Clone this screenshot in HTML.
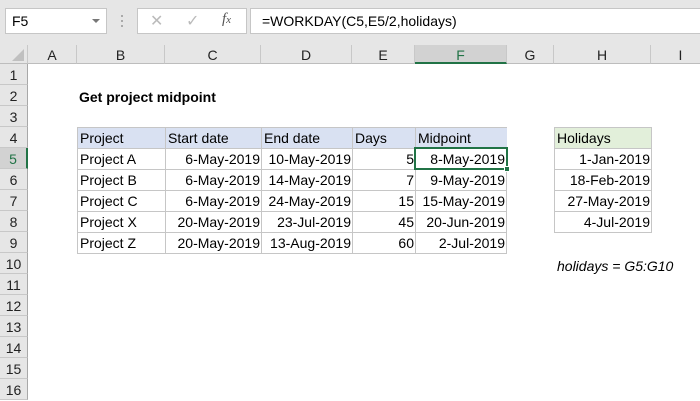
<!DOCTYPE html>
<html><head><meta charset="utf-8"><style>
*{margin:0;padding:0;box-sizing:border-box}
body{width:700px;height:400px;overflow:hidden;background:#fff;font-family:"Liberation Sans",sans-serif;font-size:14px;color:#000;position:relative}
.a{position:absolute}
.ch{position:absolute;top:45px;height:19px;background:#e6e6e6;border-right:1px solid #c8c8c8;border-bottom:1px solid #bdbdbd;text-align:center;line-height:20px;font-size:14px;color:#222}
.rh{position:absolute;left:0;width:28px;height:21px;background:#e6e6e6;border-bottom:1px solid #c8c8c8;border-right:1px solid #a8a8a8;text-align:center;line-height:22px;color:#222;font-size:14px}
.c{position:absolute;height:22px;border:1px solid #c6c6c6;line-height:21px;padding:0 1px 0 2px;white-space:nowrap;overflow:hidden}
.r{text-align:right}
</style></head><body>
<div class="a" style="left:0;top:0;width:700px;height:45px;background:#e6e6e6"></div>
<div class="a" style="left:5px;top:8px;width:102px;height:26px;background:#fff;border:1px solid #c6c6c6;line-height:24px;padding-left:6px">F5</div>
<div class="a" style="left:92px;top:19px;width:0;height:0;border-left:4px solid transparent;border-right:4px solid transparent;border-top:4px solid #777"></div>
<div class="a" style="left:121px;top:15px;width:2px;height:2px;background:#aaa;box-shadow:0 5px 0 #aaa,0 10px 0 #aaa"></div>
<div class="a" style="left:137px;top:8px;width:110px;height:26px;background:#fff;border:1px solid #c6c6c6"></div>
<div class="a" style="left:150px;top:11px;color:#bbb;font-size:16px">✕</div>
<div class="a" style="left:186px;top:11px;color:#bbb;font-size:16px">✓</div>
<div class="a" style="left:222px;top:11px;color:#555;font-family:'Liberation Serif',serif;font-style:italic;font-size:15px">f<span style="font-size:11px">x</span></div>
<div class="a" style="left:250px;top:8px;width:460px;height:26px;background:#fff;border:1px solid #c6c6c6;line-height:24px;padding-left:11px">=WORKDAY(C5,E5/2,holidays)</div>

<div class="a" style="left:0;top:45px;width:28px;height:19px;background:#e6e6e6;border-right:1px solid #c8c8c8;border-bottom:1px solid #bdbdbd"></div>
<div class="a" style="left:12px;top:49px;width:0;height:0;border-left:12px solid transparent;border-bottom:12px solid #c0c0c0"></div>
<div class="ch" style="left:28px;width:49px">A</div>
<div class="ch" style="left:77px;width:88px">B</div>
<div class="ch" style="left:165px;width:96px">C</div>
<div class="ch" style="left:261px;width:91px">D</div>
<div class="ch" style="left:352px;width:63px">E</div>
<div class="ch" style="left:415px;width:92px;background:#d2d2d2;border-bottom:2px solid #217346;color:#217346">F</div>
<div class="ch" style="left:507px;width:47px">G</div>
<div class="ch" style="left:554px;width:97px">H</div>
<div class="ch" style="left:651px;width:60px">I</div>

<div class="rh" style="top:64px">1</div>
<div class="rh" style="top:85px">2</div>
<div class="rh" style="top:106px">3</div>
<div class="rh" style="top:127px">4</div>
<div class="rh" style="top:148px;background:#d2d2d2;border-right:2px solid #217346;color:#217346">5</div>
<div class="rh" style="top:169px">6</div>
<div class="rh" style="top:190px">7</div>
<div class="rh" style="top:211px">8</div>
<div class="rh" style="top:232px">9</div>
<div class="rh" style="top:253px">10</div>
<div class="rh" style="top:274px">11</div>
<div class="rh" style="top:295px">12</div>
<div class="rh" style="top:316px">13</div>
<div class="rh" style="top:337px">14</div>
<div class="rh" style="top:358px">15</div>
<div class="rh" style="top:379px">16</div>

<div class="a" style="left:79px;top:89px;font-weight:bold">Get project midpoint</div>

<div class="c" style="left:77px;top:127px;width:89px;background:#d9e1f2">Project</div>
<div class="c" style="left:165px;top:127px;width:97px;background:#d9e1f2">Start date</div>
<div class="c" style="left:261px;top:127px;width:92px;background:#d9e1f2">End date</div>
<div class="c" style="left:352px;top:127px;width:64px;background:#d9e1f2">Days</div>
<div class="c" style="left:415px;top:127px;width:92px;background:#d9e1f2;border-right:none">Midpoint</div>

<div class="c" style="left:77px;top:148px;width:89px">Project A</div>
<div class="c r" style="left:165px;top:148px;width:97px">6-May-2019</div>
<div class="c r" style="left:261px;top:148px;width:92px">10-May-2019</div>
<div class="c r" style="left:352px;top:148px;width:64px">5</div>
<div class="c r" style="left:415px;top:148px;width:92px">8-May-2019</div>

<div class="c" style="left:77px;top:169px;width:89px">Project B</div>
<div class="c r" style="left:165px;top:169px;width:97px">6-May-2019</div>
<div class="c r" style="left:261px;top:169px;width:92px">14-May-2019</div>
<div class="c r" style="left:352px;top:169px;width:64px">7</div>
<div class="c r" style="left:415px;top:169px;width:92px">9-May-2019</div>

<div class="c" style="left:77px;top:190px;width:89px">Project C</div>
<div class="c r" style="left:165px;top:190px;width:97px">6-May-2019</div>
<div class="c r" style="left:261px;top:190px;width:92px">24-May-2019</div>
<div class="c r" style="left:352px;top:190px;width:64px">15</div>
<div class="c r" style="left:415px;top:190px;width:92px">15-May-2019</div>

<div class="c" style="left:77px;top:211px;width:89px">Project X</div>
<div class="c r" style="left:165px;top:211px;width:97px">20-May-2019</div>
<div class="c r" style="left:261px;top:211px;width:92px">23-Jul-2019</div>
<div class="c r" style="left:352px;top:211px;width:64px">45</div>
<div class="c r" style="left:415px;top:211px;width:92px">20-Jun-2019</div>

<div class="c" style="left:77px;top:232px;width:89px">Project Z</div>
<div class="c r" style="left:165px;top:232px;width:97px">20-May-2019</div>
<div class="c r" style="left:261px;top:232px;width:92px">13-Aug-2019</div>
<div class="c r" style="left:352px;top:232px;width:64px">60</div>
<div class="c r" style="left:415px;top:232px;width:92px">2-Jul-2019</div>

<div class="a" style="left:414px;top:147px;width:94px;height:23px;border:2px solid #217346"></div>
<div class="a" style="left:504px;top:166px;width:6px;height:6px;background:#217346;border:1px solid #fff"></div>

<div class="c" style="left:554px;top:127px;width:98px;background:#e2efda">Holidays</div>
<div class="c r" style="left:554px;top:148px;width:98px">1-Jan-2019</div>
<div class="c r" style="left:554px;top:169px;width:98px">18-Feb-2019</div>
<div class="c r" style="left:554px;top:190px;width:98px">27-May-2019</div>
<div class="c r" style="left:554px;top:211px;width:98px">4-Jul-2019</div>

<div class="a" style="left:557px;top:258px;font-style:italic">holidays = G5:G10</div>
</body></html>
